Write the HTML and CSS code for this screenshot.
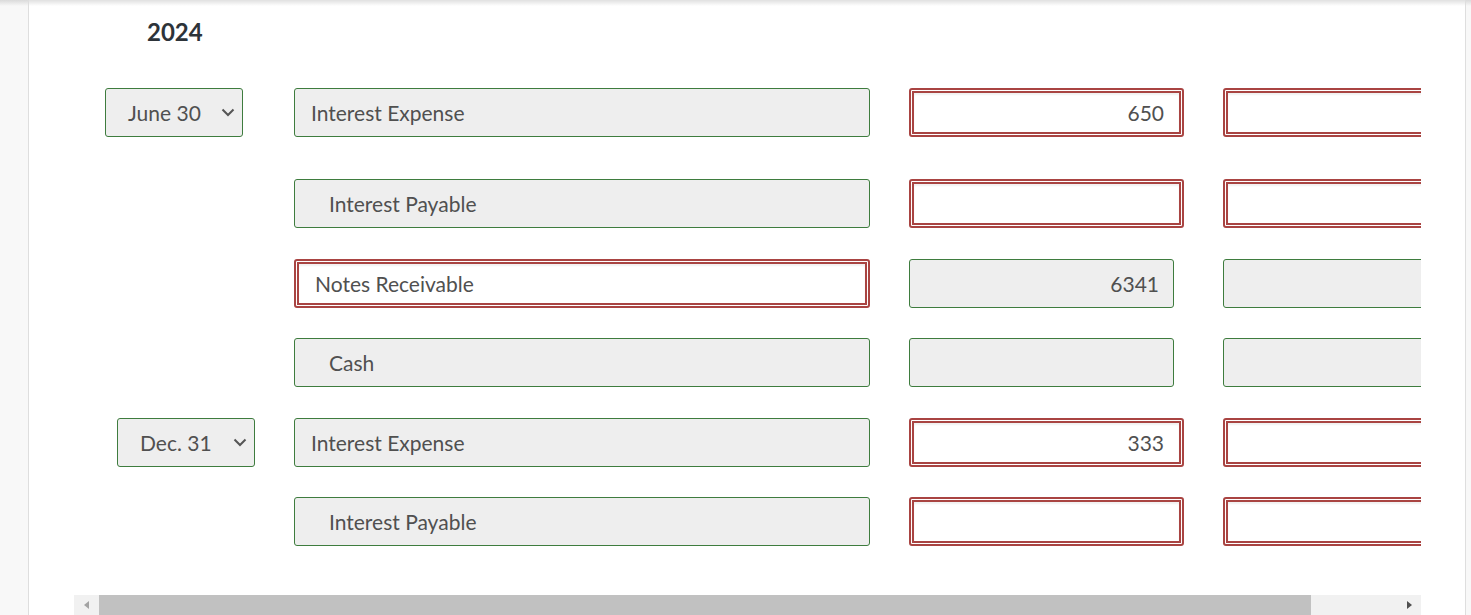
FILE: index.html
```html
<!DOCTYPE html>
<html lang="en">
<head>
  <meta charset="UTF-8">
  <meta name="viewport" content="width=device-width, initial-scale=1.0">
  <title>Journal Entries</title>
  <link rel="stylesheet" href="styles.css">
</head>
<body>
  <div class="page">
    <div class="year">2024</div>

    <div class="entries">
      <div class="table">

        <!-- June 30 -->
        <div class="row first">
          <div class="date-cell">
            <div class="date-select">June 30
              <svg class="chev" width="14" height="9" viewBox="0 0 14 9"><path d="M1.5 1.5 L7 7 L12.5 1.5" fill="none" stroke="#555" stroke-width="2"/></svg>
            </div>
          </div>
          <div class="account">Interest Expense</div>
          <div class="amount error">650</div>
          <div class="amount error"></div>
        </div>

        <div class="row">
          <div class="date-cell"></div>
          <div class="account indent">Interest Payable</div>
          <div class="amount error"></div>
          <div class="amount error"></div>
        </div>

        <div class="row">
          <div class="date-cell"></div>
          <div class="account error">Notes Receivable</div>
          <div class="amount">6341</div>
          <div class="amount"></div>
        </div>

        <div class="row">
          <div class="date-cell"></div>
          <div class="account indent">Cash</div>
          <div class="amount"></div>
          <div class="amount"></div>
        </div>

        <!-- Dec. 31 -->
        <div class="row">
          <div class="date-cell dec">
            <div class="date-select">Dec. 31
              <svg class="chev" width="14" height="9" viewBox="0 0 14 9"><path d="M1.5 1.5 L7 7 L12.5 1.5" fill="none" stroke="#555" stroke-width="2"/></svg>
            </div>
          </div>
          <div class="account">Interest Expense</div>
          <div class="amount error">333</div>
          <div class="amount error"></div>
        </div>

        <div class="row">
          <div class="date-cell"></div>
          <div class="account indent">Interest Payable</div>
          <div class="amount error"></div>
          <div class="amount error"></div>
        </div>

      </div>
    </div>

    <!-- horizontal scrollbar -->
    <div class="scrollbar">
      <span class="arrow left"></span>
      <span class="thumb"></span>
      <span class="arrow right"></span>
    </div>
  </div>
</body>
</html>
```

FILE: styles.css
```css
body {
  margin: 0;
  font-family: Lato, "Open Sans", sans-serif;
  color: #505050;
  background: linear-gradient(rgba(0, 0, 0, 0.12), rgba(0, 0, 0, 0) 6px), #f8f8f8;
  overflow: hidden;
}

.page {
  margin-left: 28px;
  width: 1438px;
  height: 615px;
  border-left: 1px solid #dedede;
  border-right: 1px solid #dedede;
  background: linear-gradient(rgba(0, 0, 0, 0.12), rgba(0, 0, 0, 0) 6px), #fff;
  box-sizing: border-box;
  padding-left: 45px;
}

.year {
  font-size: 24px;
  font-weight: bold;
  color: #2d3339;
  padding: 18px 0 0 73px;
  line-height: 28px;
  height: 42px;
}

.entries {
  width: 1347px;
  overflow: hidden;
  padding-top: 28px;
  height: 507px;
}

.table {
  width: 1500px;
}

.row {
  display: flex;
  align-items: flex-start;
  height: 48px;
  margin-bottom: 31.5px;
}

.row.first {
  margin-bottom: 43px;
}

.date-cell {
  width: 189px;
  padding-left: 31px;
  flex-shrink: 0;
}

.date-cell.dec {
  width: 177px;
  padding-left: 43px;
}

.date-select {
  width: 138px;
  height: 49px;
  box-sizing: border-box;
  border: 1px solid #3e7c3e;
  border-radius: 3px;
  background-color: #eee;
  font-size: 21px;
  line-height: 47px;
  padding-left: 22px;
  display: flex;
  align-items: center;
  justify-content: space-between;
  padding-right: 7px;
}

.account,
.amount {
  height: 49px;
  box-sizing: border-box;
  border: 1px solid #3e7c3e;
  border-radius: 3px;
  background-color: #eee;
  font-size: 21px;
  line-height: 47px;
  flex-shrink: 0;
  white-space: nowrap;
}

.account {
  width: 576px;
  padding-left: 16px;
  margin-right: 39px;
}

.account.indent {
  padding-left: 34px;
}

.amount {
  width: 265px;
  margin-right: 49px;
  text-align: right;
  padding-right: 14px;
}

.account.error,
.amount.error {
  border: 5px double #a94442;
  background-color: #fff;
  line-height: 39px;
  box-shadow: inset 0 2px 2px rgba(0, 0, 0, 0.06);
}

.account.error {
  padding-left: 16px;
}

.amount.error {
  width: 275px;
  margin-right: 39px;
  padding-right: 15px;
}

.scrollbar {
  width: 1347px;
  height: 20px;
  background-color: #f1f1f1;
  display: flex;
  align-items: center;
}

.thumb {
  height: 20px;
  width: 1212px;
  margin-left: 10px;
  background-color: #c1c1c1;
}

.arrow {
  width: 0;
  height: 0;
  border-top: 4px solid transparent;
  border-bottom: 4px solid transparent;
}

.arrow.left {
  margin-left: 10px;
  border-right: 5px solid #a3a3a3;
}

.arrow.right {
  margin-left: 96px;
  border-left: 5px solid #505050;
}
```
